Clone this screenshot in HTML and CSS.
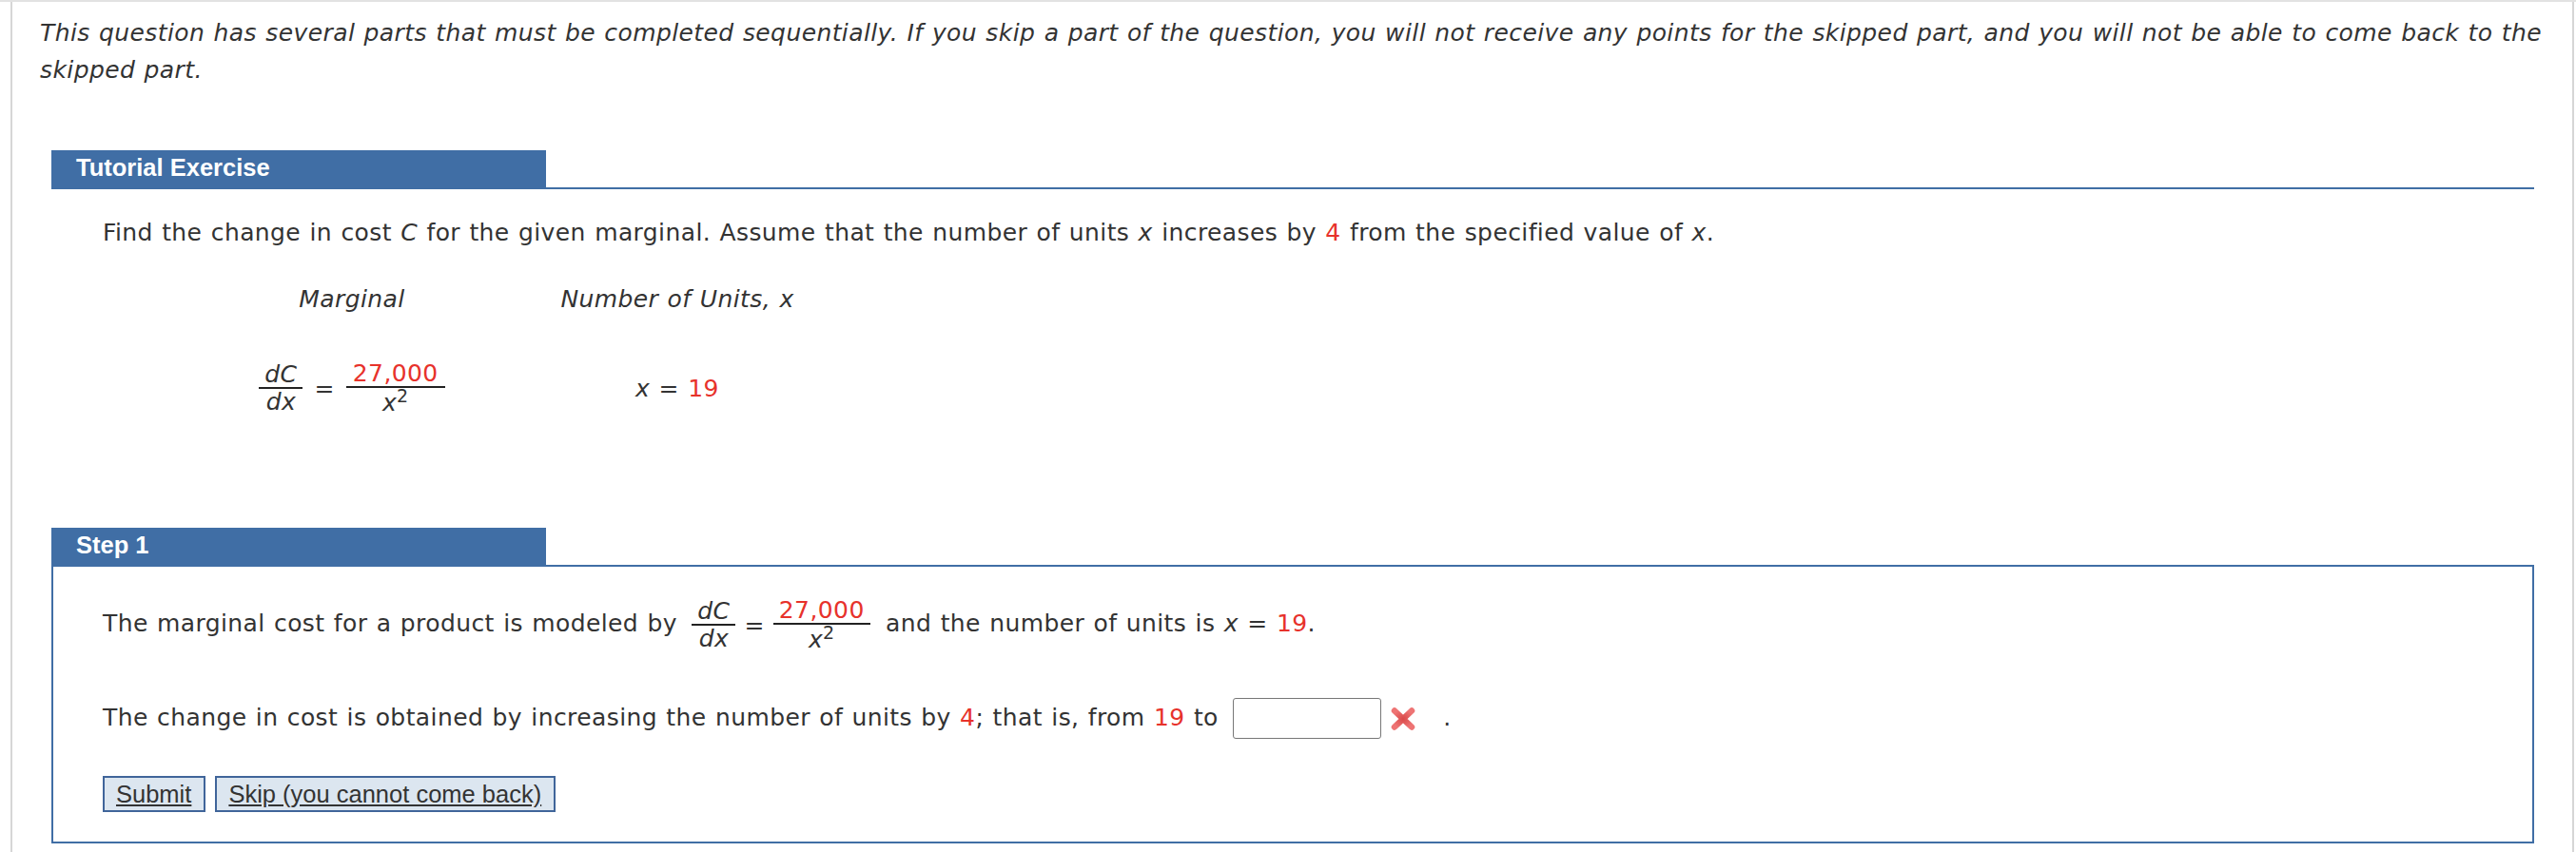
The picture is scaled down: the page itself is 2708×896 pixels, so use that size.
FILE: index.html
```html
<!DOCTYPE html>
<html>
<head>
<meta charset="utf-8">
<link rel="stylesheet" href="styles.css">
</head>
<body>
<div class="topbar"></div>
<div class="frame">
  <p class="intro">This question has several parts that must be completed sequentially. If you skip a part of the question, you will not receive any points for the skipped part, and you will not be able to come back to the skipped part.</p>

  <section class="tutorial">
    <div class="tabrow"><div class="tab">Tutorial Exercise</div></div>
    <p class="prompt">Find the change in cost <i>C</i> for the given marginal. Assume that the number of units <i>x</i> increases by <span class="red">4</span> from the specified value of <i>x</i>.</p>
    <div class="given">
      <div class="th">Marginal</div>
      <div class="th">Number of Units, x</div>
      <div class="td">
        <span class="frac small"><span class="num"><i>dC</i></span><span class="den"><i>dx</i></span></span>
        <span class="eq">=</span>
        <span class="frac big"><span class="num red">27,000</span><span class="den"><i>x</i><sup>2</sup></span></span>
      </div>
      <div class="td"><span><i>x</i> = <span class="red">19</span></span></div>
    </div>
  </section>

  <section class="step">
    <div class="tab">Step 1</div>
    <div class="step-box">
      <p class="line1">The marginal cost for a product is modeled by <span class="frac small"><span class="num"><i>dC</i></span><span class="den"><i>dx</i></span></span><span class="eq">=</span><span class="frac big"><span class="num red">27,000</span><span class="den"><i>x</i><sup>2</sup></span></span> and the number of units is <i>x</i> = <span class="red">19</span>.</p>
      <p class="line2">The change in cost is obtained by increasing the number of units by <span class="red">4</span>; that is, from <span class="red">19</span> to <input class="answer" type="text"><svg class="wrong" width="28" height="26" viewBox="0 0 28 26"><defs><radialGradient id="xg" cx="50%" cy="50%" r="60%"><stop offset="0" stop-color="#d94848"/><stop offset="1" stop-color="#ee7474"/></radialGradient></defs><path d="M5 4.5 L23 21.5 M23 4.5 L5 21.5" stroke="url(#xg)" stroke-width="6.5" stroke-linecap="round" fill="none"/></svg><span class="dot">.</span></p>
      <div class="buttons">
        <button class="btn">Submit</button>
        <button class="btn">Skip (you cannot come back)</button>
      </div>
    </div>
  </section>
</div>
</body>
</html>
```

FILE: styles.css
```css
html, body {
  margin: 0;
  padding: 0;
  background: #fff;
}
body {
  width: 2708px;
  height: 896px;
  overflow: hidden;
  font-family: "DejaVu Sans", Verdana, sans-serif;
  font-size: 25px;
  letter-spacing: 0.4px;
  word-spacing: 1px;
  color: #333;
}
.topbar {
  height: 2px;
  background: #e2e2e2;
}
.frame {
  margin: 0 2px 0 11px;
  border-left: 2px solid #d6d6d6;
  border-right: 2px solid #d6d6d6;
  height: 894px;
  box-sizing: border-box;
  padding: 13px 0 0 0;
}
.intro {
  margin: 0;
  padding: 0 30px 0 29px;
  font-style: italic;
  line-height: 39px;
}
.red { color: #e7322b; }
.tutorial {
  margin: 65px 40px 0 41px;
}
.tabrow {
  border-bottom: 2px solid #406ea5;
}
.tab {
  width: 494px;
  height: 39px;
  padding: 0 0 0 26px;
  background: #406ea5;
  color: #fff;
  font-family: "Liberation Sans", Arial, sans-serif;
  font-weight: bold;
  font-size: 25.5px;
  letter-spacing: 0;
  word-spacing: 0;
  line-height: 36px;
}
.prompt {
  margin: 26px 0 0 54px;
  line-height: 39px;
}
.given {
  display: grid;
  grid-template-columns: 312px 372px;
  margin: 31px 0 0 160px;
  justify-items: center;
  align-items: center;
  row-gap: 46px;
}
.th {
  font-style: italic;
  line-height: 39px;
}
.td {
  display: flex;
  align-items: center;
  line-height: 39px;
}
.frac {
  display: inline-flex;
  flex-direction: column;
  align-items: stretch;
  text-align: center;
  vertical-align: middle;
}
.frac .num {
  line-height: 27px;
  border-bottom: 2px solid #222;
  padding: 0 7px;
}
.frac .den {
  line-height: 27px;
  padding: 0 7px;
}
.frac.small .num { padding: 0 6px; }
.frac.big .den { position: relative; top: 2px; }
.frac.big { position: relative; top: -1px; }
sup {
  font-size: 19px;
  line-height: 0;
  vertical-align: 9px;
  font-style: normal;
}
.eq {
  display: inline-block;
  margin: 0 9px 0 9px;
  vertical-align: middle;
}
.td .eq { margin: 0 12px 0 12px; }
.step {
  margin: 119px 40px 0 41px;
}
.step .tab {
  height: 39px;
}
.step-box {
  border: 2px solid #406ea5;
  padding: 0 0 0 52px;
  height: 289px;
}
.line1 {
  margin: 33px 0 0 0;
  line-height: 39px;
}
.line1 .frac.small { margin-left: 6px; }
.line1 .frac.big { margin-right: 7px; }
.line1 .frac.big .num { padding: 0 6px; }
.line2 {
  margin: 49px 0 0 0;
  line-height: 39px;
}
.answer {
  box-sizing: border-box;
  width: 156px;
  height: 43px;
  border: 1.5px solid #777;
  border-radius: 3px;
  margin: 0 0 0 6px;
  padding: 0;
  vertical-align: middle;
  background: #fff;
}
.wrong {
  vertical-align: middle;
  margin-left: 9px;
}
.dot {
  margin-left: 28px;
}
.buttons {
  display: flex;
  gap: 10px;
  margin-top: 39px;
}
.btn {
  box-sizing: border-box;
  height: 38px;
  padding: 0 13px 0 12px;
  background: #dce6f0;
  border: 2px solid #40659a;
  border-radius: 0;
  font-family: "Liberation Sans", Arial, sans-serif;
  font-size: 25.5px;
  letter-spacing: 0;
  word-spacing: 0;
  color: #333;
  text-decoration: underline;
  line-height: 34px;
}
```
